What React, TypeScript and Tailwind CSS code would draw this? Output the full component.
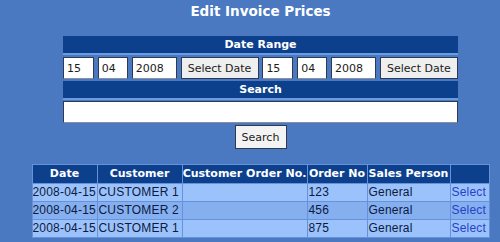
import { useState } from 'react';

interface InvoiceRow {
    date: string;
    customer: string;
    customerOrderNo: string;
    orderNo: string;
    salesPerson: string;
}

const invoiceRows: InvoiceRow[] = [
    { date: '2008-04-15', customer: 'CUSTOMER 1', customerOrderNo: '', orderNo: '123', salesPerson: 'General' },
    { date: '2008-04-15', customer: 'CUSTOMER 2', customerOrderNo: '', orderNo: '456', salesPerson: 'General' },
    { date: '2008-04-15', customer: 'CUSTOMER 1', customerOrderNo: '', orderNo: '875', salesPerson: 'General' },
];

function DateInputs({ day, month, year }: { day: string; month: string; year: string }) {
    return (
        <>
            <input defaultValue={day} className="w-[31px] h-[22px] field-style" />
            <input defaultValue={month} className="w-[30px] h-[22px] field-style" />
            <input defaultValue={year} className="w-[45px] h-[22px] field-style" />
            <button type="button" className="w-[78px] h-[22px] bg-[#efefef] border border-[#2e3a52] text-[#1c1c1c] text-[11px] leading-none">
                Select Date
            </button>
        </>
    );
}

function App() {
    const [search, setSearch] = useState('');

    return (
        <div className="min-h-screen bg-[#4a79c2] pl-[21px] font-['DejaVu_Sans',sans-serif]">
            <h1 className="h-[36px] pt-[4px] text-center text-[13.5px] leading-[15px] font-bold text-white">Edit Invoice Prices</h1>

            <form className="mx-auto w-[395px]" onSubmit={(e) => e.preventDefault()}>
                {/* Date range */}
                <div className="h-[19px] bg-[#0c3f8c] border-b-2 border-[#6a9ae0] text-center text-[11px] leading-[18px] font-bold text-white">Date Range</div>
                <div className="h-[26px] py-[2px] flex justify-between">
                    <DateInputs day="15" month="04" year="2008" />
                    <DateInputs day="15" month="04" year="2008" />
                </div>

                {/* Search */}
                <div className="h-[19px] bg-[#0c3f8c] border-b-2 border-[#6a9ae0] text-center text-[11px] leading-[18px] font-bold text-white">Search</div>
                <input
                    value={search}
                    onChange={(e) => setSearch(e.target.value)}
                    className="mt-[1px] block w-full h-[22px] field-style"
                />
                <div className="flex justify-center pt-[2px]">
                    <button type="submit" className="w-[52px] h-[24px] bg-[#f3f3f3] border border-[#2e3a52] text-[#1c1c1c] text-[11px] leading-none">
                        Search
                    </button>
                </div>
            </form>

            {/* Results */}
            <table className="mx-auto mt-[15px] w-[458px] table-fixed border-separate border-spacing-[1px] bg-[#6592da]">
                <colgroup>
                    <col className="w-[64px]" />
                    <col className="w-[84px]" />
                    <col className="w-[124px]" />
                    <col className="w-[59px]" />
                    <col className="w-[82px]" />
                    <col className="w-[38px]" />
                </colgroup>
                <thead>
                    <tr className="h-[18px] bg-[#0c3f8c] text-white text-[11px] font-bold">
                        <th className="p-0 leading-[18px] whitespace-nowrap">Date</th>
                        <th className="p-0 leading-[18px] whitespace-nowrap">Customer</th>
                        <th className="p-0 leading-[18px] whitespace-nowrap">Customer Order No.</th>
                        <th className="p-0 leading-[18px] whitespace-nowrap">Order No</th>
                        <th className="p-0 leading-[18px] whitespace-nowrap">Sales Person</th>
                        <th className="p-0"></th>
                    </tr>
                </thead>
                <tbody className="font-['Liberation_Sans',Arial,sans-serif] text-[12px] tracking-[0.2px] text-[#0b1a3f]">
                    {invoiceRows.map((row, i) => (
                        <tr key={i} className={`h-[17px] ${i % 2 === 1 ? 'bg-[#86aff0]' : 'bg-[#9cc2fb]'}`}>
                            <td className="p-0 leading-[17px] whitespace-nowrap overflow-hidden">{row.date}</td>
                            <td className="p-0 pl-[1px] leading-[17px] whitespace-nowrap">{row.customer}</td>
                            <td className="p-0 leading-[17px] whitespace-nowrap">{row.customerOrderNo}</td>
                            <td className="p-0 pl-[1px] leading-[17px] whitespace-nowrap">{row.orderNo}</td>
                            <td className="p-0 pl-[1px] leading-[17px] whitespace-nowrap">{row.salesPerson}</td>
                            <td className="p-0 pl-[1px] leading-[17px] whitespace-nowrap">
                                <a href="#" className="text-[#2542c9]">Select</a>
                            </td>
                        </tr>
                    ))}
                </tbody>
            </table>

            <style>{`
                .field-style {
                    background: #ffffff;
                    border: 1px solid #2e3a52;
                    border-bottom-color: #8a8f99;
                    padding: 0 3px;
                    font-size: 11px;
                    color: #1c1c1c;
                    outline: none;
                }
            `}</style>
        </div>
    );
}

export default App;
